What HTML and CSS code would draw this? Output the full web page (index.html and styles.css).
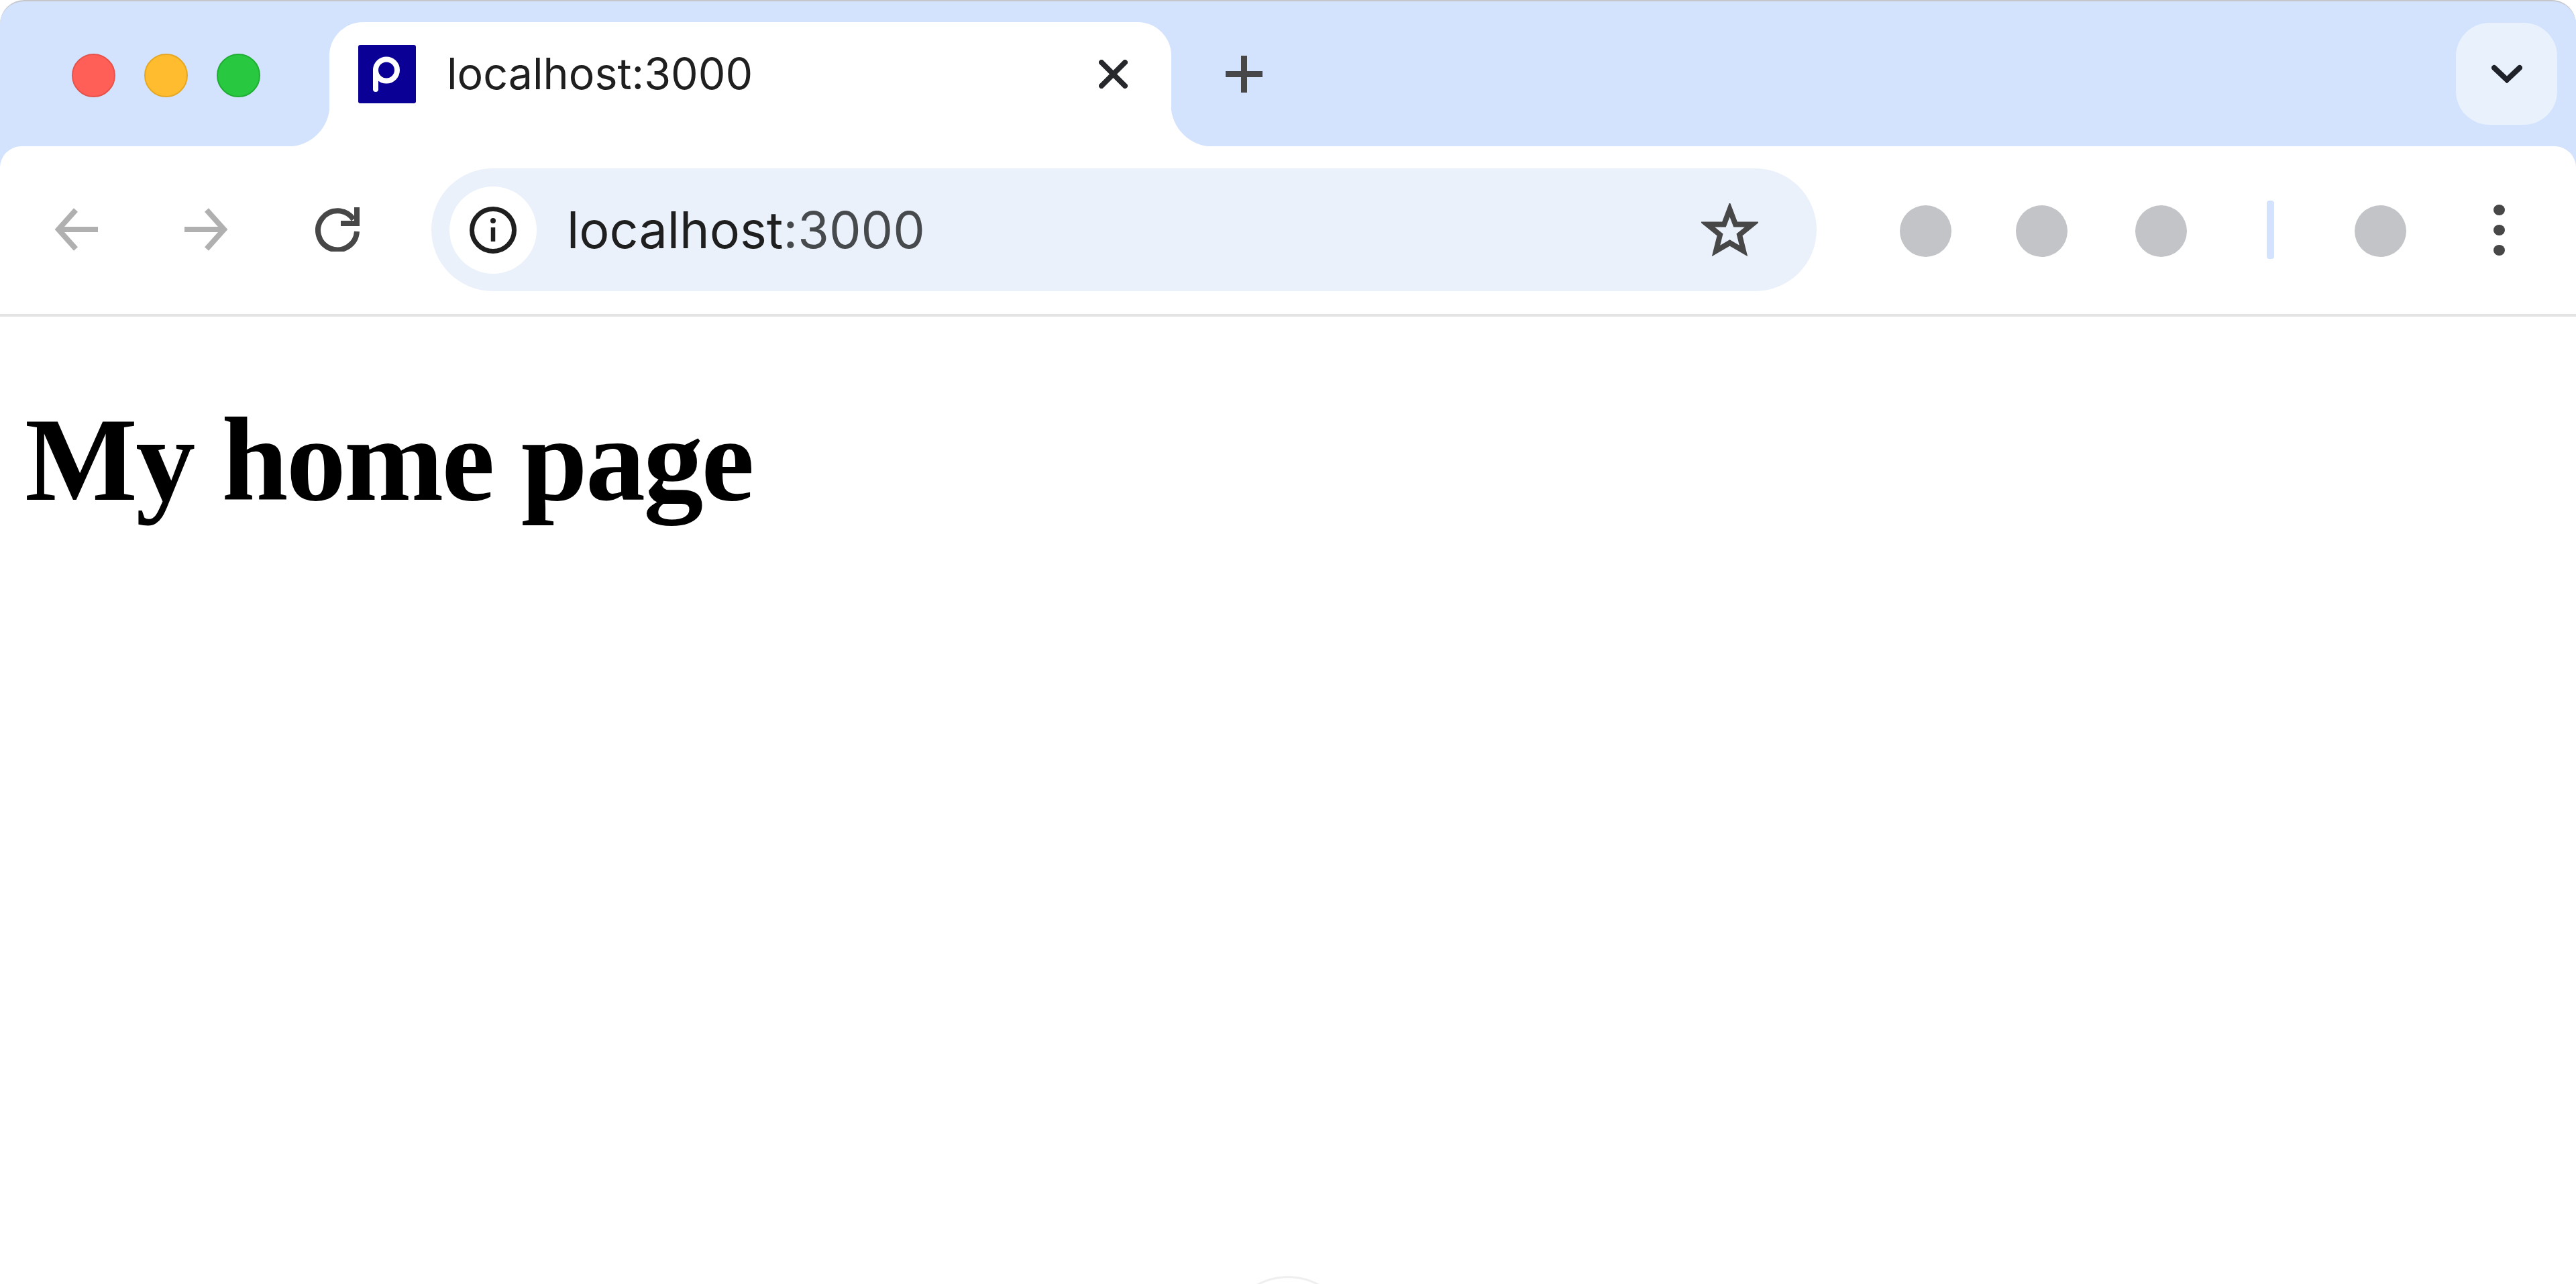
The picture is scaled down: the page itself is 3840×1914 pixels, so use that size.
FILE: index.html
```html
<!DOCTYPE html>
<html lang="en">
<head>
    <meta charset="UTF-8">
    <meta name="viewport" content="width=device-width, initial-scale=1.0">
    <title>My home page</title>
    <link rel="stylesheet" href="styles.css">
</head>
<body>
    <div class="window">
        <div class="tab-strip">
            <div class="traffic-lights">
                <span class="light light-red"></span>
                <span class="light light-yellow"></span>
                <span class="light light-green"></span>
            </div>
            <div class="tab">
                <svg class="favicon" viewBox="0 0 86 87">
                    <rect width="86" height="87" rx="3" fill="#0b0095"/>
                    <circle cx="42" cy="37.500" r="16" fill="none" stroke="#fff" stroke-width="8"/>
                    <path d="M26 37V66" fill="none" stroke="#fff" stroke-width="8" stroke-linecap="round"/>
                </svg>
                <span class="tab-title">localhost:3000</span>
                <svg class="tab-close" viewBox="0 0 43 43">
                    <path d="M4 4L39 39M39 4L4 39" fill="none" stroke="#26282c" stroke-width="8" stroke-linecap="round"/>
                </svg>
            </div>
            <svg class="new-tab" viewBox="0 0 55 55">
                <path d="M27.500 0V55M0 27.500H55" fill="none" stroke="#474747" stroke-width="9"/>
            </svg>
            <div class="tab-search">
                <svg class="chevron" viewBox="0 0 46 28">
                    <path d="M4 5L23 23L42 5" fill="none" stroke="#1f2329" stroke-width="8" stroke-linecap="round"/>
                </svg>
            </div>
        </div>

        <div class="toolbar">
            <div class="nav-buttons">
                <svg class="nav-icon" viewBox="0 0 66 66">
                    <path d="M66 33H7M33 4L7 33L33 62" fill="none" stroke="#b0b0b0" stroke-width="8"/>
                </svg>
                <svg class="nav-icon" viewBox="0 0 66 66">
                    <path d="M0 33H59M33 4L59 33L33 62" fill="none" stroke="#b0b0b0" stroke-width="8"/>
                </svg>
                <svg class="nav-icon" viewBox="0 0 66 66">
                    <path d="M57 18A29 29 0 1 0 62 36" fill="none" stroke="#474747" stroke-width="8"/>
                    <path d="M66 0V28H38V20H58V0Z" fill="#474747"/>
                </svg>
            </div>
            <div class="omnibox">
                <div class="site-info">
                    <svg class="info-icon" viewBox="0 0 70 70">
                        <circle cx="35" cy="35" r="31.500" fill="none" stroke="#1f1f1f" stroke-width="7"/>
                        <path d="M35 31V52" fill="none" stroke="#1f1f1f" stroke-width="6.500"/>
                        <circle cx="35" cy="21" r="4" fill="#1f1f1f"/>
                    </svg>
                </div>
                <div class="url"><span class="url-host">localhost</span><span class="url-port">:3000</span></div>
                <svg class="star" viewBox="0 0 85 80">
                    <path d="M42.500 9L51 31.500H76L57 47L63 71L42.500 59L22 71L28 47L9 31.500H34Z" fill="none" stroke="#474747" stroke-width="8" stroke-miterlimit="10"/>
                </svg>
            </div>
            <div class="extensions">
                <span class="ext-dot"></span>
                <span class="ext-dot"></span>
                <span class="ext-dot"></span>
                <span class="ext-divider"></span>
                <span class="ext-dot"></span>
                <div class="kebab">
                    <span></span>
                    <span></span>
                    <span></span>
                </div>
            </div>
        </div>

        <main class="page">
            <h1>My home page</h1>
        </main>
        <div class="scroll-hint"></div>
    </div>
</body>
</html>
```

FILE: styles.css
```css
html, body {
    margin: 0;
    height: 100%;
    background-color: #fff;
}

.window {
    position: relative;
    height: 1914px;
    overflow: hidden;
    display: flex;
    flex-direction: column;
    font-family: Inter, "Liberation Sans", sans-serif;
}

.tab-strip {
    height: 250px;
    flex-shrink: 0;
    box-sizing: border-box;
    background-color: #d3e3fd;
    border-top: 2px solid #c4c6ca;
    border-radius: 36px 36px 0 0;
    padding-top: 31px;
    display: flex;
    align-items: flex-start;
}

.traffic-lights {
    width: 491px;
    flex-shrink: 0;
    box-sizing: border-box;
    padding: 47px 0 0 107px;
    display: flex;
    gap: 43px;
}

.light {
    width: 65px;
    height: 65px;
    border-radius: 50%;
    box-sizing: border-box;
    border: 2px solid;
}

.light-red {
    background-color: #ff5f57;
    border-color: #e5534b;
}

.light-yellow {
    background-color: #febc2e;
    border-color: #e6a823;
}

.light-green {
    background-color: #28c840;
    border-color: #1fae33;
}

.tab {
    position: relative;
    width: 1255px;
    height: 185px;
    flex-shrink: 0;
    box-sizing: border-box;
    background-color: #fff;
    border-radius: 50px 50px 0 0;
    padding: 34px 65px 0 43px;
    display: flex;
    align-items: flex-start;
}

/* the two curves where the tab runs into the toolbar */
.tab::before,
.tab::after {
    content: "";
    position: absolute;
    bottom: 0;
    width: 62px;
    height: 62px;
    background-color: #fff;
}

.tab::before {
    left: -62px;
    -webkit-mask: radial-gradient(circle at 0 0, transparent 62px, #000 63px);
    mask: radial-gradient(circle at 0 0, transparent 62px, #000 63px);
}

.tab::after {
    right: -62px;
    -webkit-mask: radial-gradient(circle at 100% 0, transparent 62px, #000 63px);
    mask: radial-gradient(circle at 100% 0, transparent 62px, #000 63px);
}

.favicon {
    width: 86px;
    height: 87px;
    flex-shrink: 0;
}

.tab-title {
    margin-left: 46px;
    font-size: 64.500px;
    line-height: 87px;
    color: #1f1f1f;
    flex-grow: 1;
}

.tab-close {
    width: 43px;
    height: 43px;
    margin-top: 22px;
}

.new-tab {
    width: 55px;
    height: 55px;
    margin: 50px 0 0 81px;
    flex-shrink: 0;
}

.tab-search {
    width: 151px;
    height: 152px;
    margin: 1px 28px 0 auto;
    background-color: #e9f1fd;
    border-radius: 50px;
    display: flex;
    align-items: center;
    justify-content: center;
}

.chevron {
    width: 46px;
    height: 28px;
}

.toolbar {
    position: relative;
    height: 254px;
    flex-shrink: 0;
    box-sizing: border-box;
    background-color: #fff;
    border-radius: 32px 32px 0 0;
    margin-top: -32px;
    padding-top: 33px;
    border-bottom: 4px solid #e3e3e3;
    display: flex;
    align-items: flex-start;
}

.nav-buttons {
    width: 643px;
    flex-shrink: 0;
    box-sizing: border-box;
    padding: 58px 0 0 80px;
    display: flex;
    gap: 129px;
}

.nav-icon {
    width: 66px;
    height: 66px;
}

.omnibox {
    width: 2065px;
    height: 183px;
    flex-shrink: 0;
    box-sizing: border-box;
    background-color: #eaf1fa;
    border-radius: 92px;
    padding: 0 87px 0 27px;
    display: flex;
    align-items: center;
}

.site-info {
    width: 130px;
    height: 130px;
    flex-shrink: 0;
    background-color: #fff;
    border-radius: 50%;
    display: flex;
    align-items: center;
    justify-content: center;
}

.info-icon {
    width: 70px;
    height: 70px;
}

.url {
    margin-left: 45px;
    font-size: 75.500px;
    flex-grow: 1;
}

.url-host {
    color: #1f1f1f;
}

.url-port {
    color: #474a4d;
}

.star {
    width: 85px;
    height: 80px;
}

.extensions {
    flex-grow: 1;
    height: 183px;
    display: flex;
    align-items: center;
}

.ext-dot {
    width: 77px;
    height: 77px;
    flex-shrink: 0;
    margin-top: 3px;
    margin-left: 96px;
    border-radius: 50%;
    background-color: #c2c4c7;
}

.ext-dot:first-child {
    margin-left: 124px;
}

.ext-dot:nth-child(3) {
    margin-left: 101px;
}

.ext-divider {
    width: 11px;
    height: 87px;
    flex-shrink: 0;
    margin: 0 120px 0 119px;
    border-radius: 4px;
    background-color: #d3e3fd;
}

.ext-divider + .ext-dot {
    margin-left: 0;
}

.kebab {
    margin-left: 130px;
    display: flex;
    flex-direction: column;
    gap: 14px;
}

.kebab span {
    width: 17px;
    height: 16px;
    border-radius: 50%;
    background-color: #474747;
}

.page {
    flex-grow: 1;
    padding: 0 37px;
}

h1 {
    margin: 111px 0 0;
    font-family: "Liberation Serif", serif;
    font-size: 178px;
    font-weight: bold;
    letter-spacing: -2.700px;
    color: #000;
    line-height: 1.15;
}

/* edge of a round control, cut off by the bottom of the window */
.scroll-hint {
    position: absolute;
    left: 1822px;
    bottom: -184px;
    width: 196px;
    height: 196px;
    box-sizing: border-box;
    border: 3px solid #efefef;
    border-radius: 50%;
}
```
